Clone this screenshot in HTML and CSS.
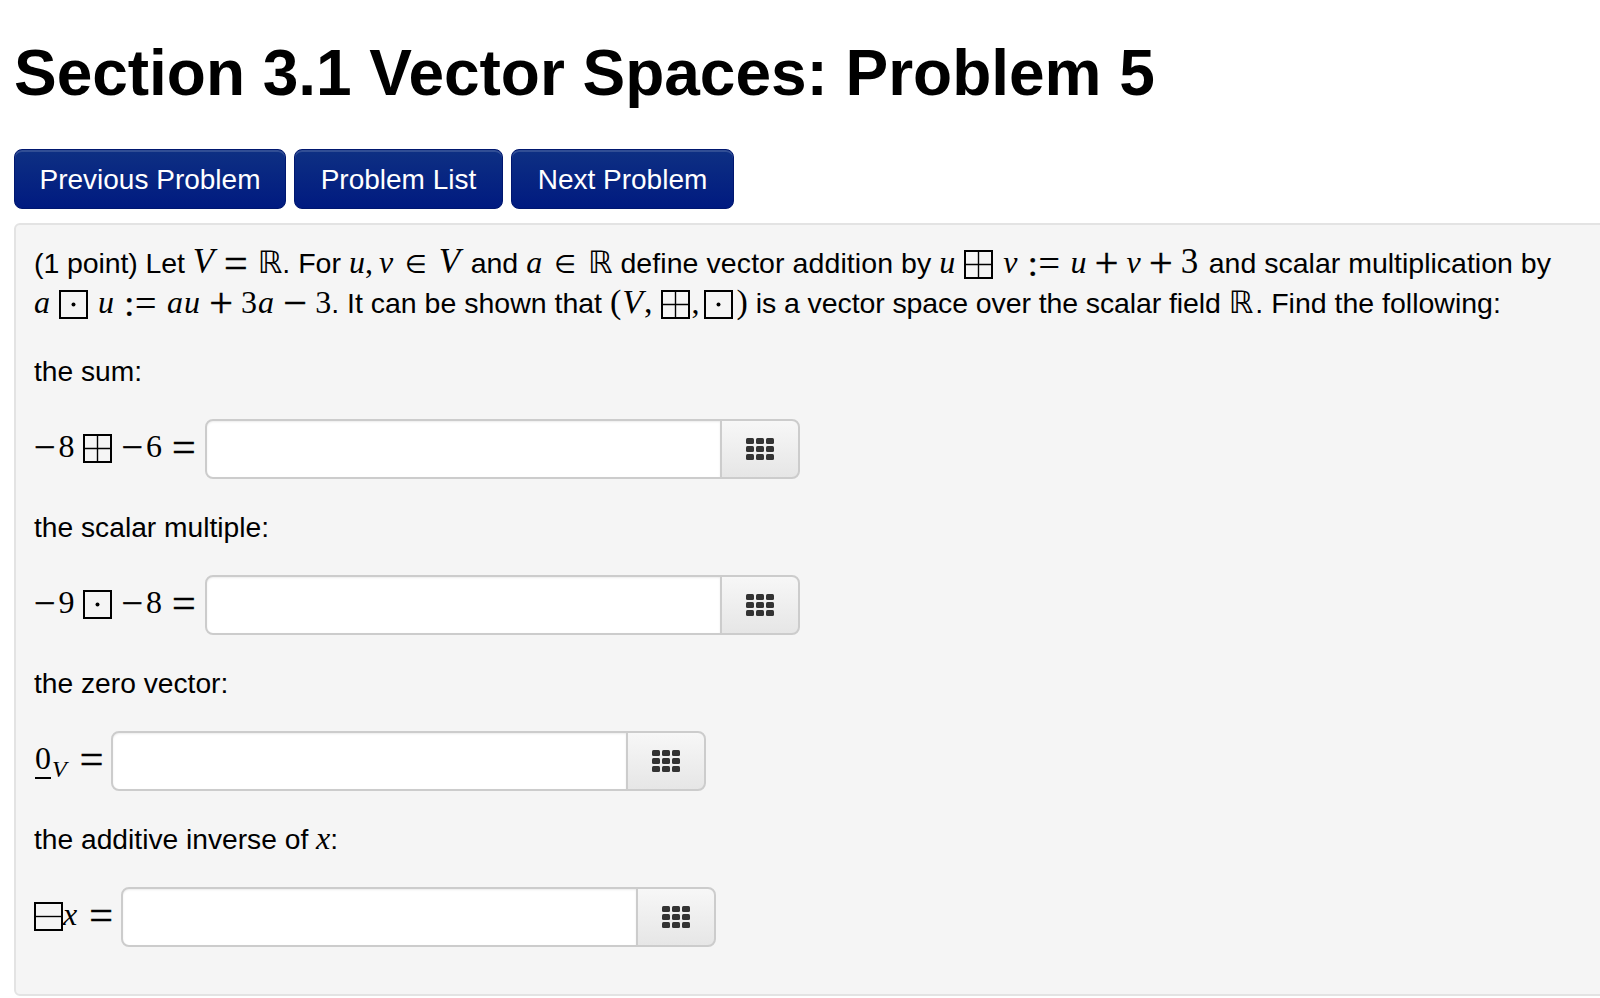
FILE: index.html
```html
<!DOCTYPE html>
<html lang="en">
<head>
<meta charset="utf-8">
<title>Section 3.1 Vector Spaces: Problem 5</title>
<link rel="stylesheet" href="styles.css">
</head>
<body>
<svg class="defs" width="0" height="0" aria-hidden="true">
  <defs>
    <symbol id="boxplus" viewBox="0 0 29 29"><rect x="1" y="1" width="27" height="27" fill="none" stroke="#000" stroke-width="2"/><path d="M14.5 1V28M1 14.5H28" stroke="#000" stroke-width="1.4"/></symbol>
    <symbol id="boxdot" viewBox="0 0 29 29"><rect x="1" y="1" width="27" height="27" fill="none" stroke="#000" stroke-width="2"/><circle cx="14.5" cy="14.5" r="2" fill="#000"/></symbol>
    <symbol id="boxminus" viewBox="0 0 29 29"><rect x="1" y="1" width="27" height="27" fill="none" stroke="#000" stroke-width="2"/><path d="M1 14.5H28" stroke="#000" stroke-width="1.4"/></symbol>
    <symbol id="grid" viewBox="0 0 28 22"><g fill="#333"><rect x="0" width="8" height="6" rx="1.5"/><rect x="10" width="8" height="6" rx="1.5"/><rect x="20" width="8" height="6" rx="1.5"/><rect x="0" y="8" width="8" height="6" rx="1.5"/><rect x="10" y="8" width="8" height="6" rx="1.5"/><rect x="20" y="8" width="8" height="6" rx="1.5"/><rect x="0" y="16" width="8" height="6" rx="1.5"/><rect x="10" y="16" width="8" height="6" rx="1.5"/><rect x="20" y="16" width="8" height="6" rx="1.5"/></g></symbol>
  </defs>
</svg>
<h1 class="title">Section 3.1 Vector Spaces: Problem 5</h1>
<nav class="nav">
  <a class="btn btn-first">Previous Problem</a>
  <a class="btn">Problem List</a>
  <a class="btn">Next Problem</a>
</nav>
<main class="well">
  <p class="intro"><span class="snug">(1 point) Let</span> <span class="m big"><i>V</i></span><span class="rel">=</span><span class="bb">ℝ</span>. For <span class="m"><i>u</i>,<i class="after-comma">v</i></span><span class="el">∈</span><span class="m big end"><i>V</i></span> and <span class="m"><i>a</i></span><span class="el">∈</span><span class="bb">ℝ</span> <span class="loose">define vector addition by</span> <span class="m"><i>u</i></span><svg class="box gap"><use href="#boxplus"/></svg><span class="m"><i>v</i></span><span class="rel assign">:=</span><span class="m"><i>u</i></span><span class="bin">+</span><span class="m"><i>v</i></span><span class="bin">+</span><span class="m big end">3</span> and scalar multiplication by<br>
  <span class="m"><i>a</i></span><svg class="box gap"><use href="#boxdot"/></svg><span class="m"><i>u</i></span><span class="rel assign">:=</span><span class="m spread"><i>au</i></span><span class="bin">+</span><span class="m spread">3<i>a</i></span><span class="bin">−</span><span class="m">3</span>. It can be shown that <span class="m paren">(<i>V</i>,</span><svg class="box tight"><use href="#boxplus"/></svg><span class="m">,</span><svg class="box tight"><use href="#boxdot"/></svg><span class="m close">)</span> <span class="snug">is a vector space over the scalar field</span> <span class="bb tail">ℝ</span>. Find the following:</p>

  <p class="label">the sum:</p>
  <div class="row">
    <span class="expr"><span class="neg">−</span><span class="m">8</span><svg class="box gap"><use href="#boxplus"/></svg><span class="neg">−</span><span class="m">6</span><span class="rel">=</span></span>
    <span class="group"><input class="field" type="text" aria-label="sum"><span class="addon"><svg class="grid"><use href="#grid"/></svg></span></span>
  </div>

  <p class="label">the scalar multiple:</p>
  <div class="row">
    <span class="expr"><span class="neg">−</span><span class="m">9</span><svg class="box gap"><use href="#boxdot"/></svg><span class="neg">−</span><span class="m">8</span><span class="rel">=</span></span>
    <span class="group"><input class="field" type="text" aria-label="scalar multiple"><span class="addon"><svg class="grid"><use href="#grid"/></svg></span></span>
  </div>

  <p class="label">the zero vector:</p>
  <div class="row">
    <span class="expr"><span class="m"><span class="under">0</span><sub class="sub"><i>V</i></sub></span><span class="rel shift">=</span></span>
    <span class="group"><input class="field" type="text" aria-label="zero vector"><span class="addon"><svg class="grid"><use href="#grid"/></svg></span></span>
  </div>

  <p class="label">the additive inverse of <span class="m"><i>x</i></span>:</p>
  <div class="row">
    <span class="expr"><svg class="box"><use href="#boxminus"/></svg><span class="m"><i>x</i></span><span class="rel shift">=</span></span>
    <span class="group"><input class="field" type="text" aria-label="additive inverse"><span class="addon"><svg class="grid"><use href="#grid"/></svg></span></span>
  </div>
</main>
</body>
</html>
```

FILE: styles.css
```css
html, body {
  margin: 0;
  height: 998px;
  overflow: hidden;
  background: #fff;
}
body {
  padding: 38px 0 0 14px;
  box-sizing: border-box;
  font-family: "Liberation Sans", Arial, sans-serif;
  font-size: 28px;
  line-height: 40px;
  color: #000;
}
.defs { position: absolute; }
.title {
  margin: 0 0 41px;
  font-size: 64px;
  line-height: 70px;
  font-weight: 700;
  letter-spacing: -0.03px;
}
.nav {
  display: flex;
  gap: 8px;
  margin-bottom: 14px;
}
.btn {
  display: block;
  height: 60px;
  box-sizing: border-box;
  padding: 0 25.7px;
  line-height: 60px;
  color: #fff;
  border: 1px solid #00176f;
  border-radius: 8px;
  background: linear-gradient(#0e3083, #001a80);
  box-shadow: inset 0 2px 0 rgba(255, 255, 255, .15);
}
.btn-first { padding: 0 24.5px; }
.well {
  box-sizing: border-box;
  height: 773px;
  margin-right: -12px;
  padding: 18px 18px 0;
  background: #f5f5f5;
  border: 2px solid #e3e3e3;
  border-radius: 6px;
}
.intro { margin: 0 0 28px; white-space: nowrap; font-size: 28.5px; }
.snug { letter-spacing: -0.1px; }
.loose { letter-spacing: 0.08px; }
.label { margin: 0 0 28px; height: 40px; font-size: 28.2px; }
.row {
  display: flex;
  align-items: center;
  height: 60px;
  margin-bottom: 28px;
  white-space: nowrap;
}
.expr { display: block; height: 40px; margin-top: -3px; }
.m {
  font-family: "Liberation Serif", "Times New Roman", serif;
  font-size: 32px;
  line-height: 0;
}
.m.big { font-size: 35px; }
.m.end { margin-right: 2.5px; }
.m.spread { letter-spacing: 1px; }
.after-comma { margin-left: 6px; }
.paren { font-size: 34px; letter-spacing: 1px; padding-right: 3px; }
.close { font-size: 34px; margin-left: 2px; }
.rel, .bin, .neg {
  font-family: "Liberation Serif", "Times New Roman", serif;
  font-size: 42px;
  line-height: 0;
  vertical-align: -4px;
  -webkit-text-stroke: 0.5px #000;
}
.rel { margin: 0 10px; }
.rel.shift { margin: 0 8px 0 12px; }
.expr .neg ~ .rel { margin-right: 9px; }
.bin { margin: 0 8.2px; }
.assign {
  font-size: 38px;
  letter-spacing: 0.5px;
  vertical-align: -3px;
  -webkit-text-stroke: 0.2px #000;
}
.neg { font-size: 38px; margin-right: 3px; vertical-align: -3px; }
.el {
  font-family: "DejaVu Sans", sans-serif;
  font-size: 25px;
  line-height: 0;
  margin: 0 12px;
}
.bb { font-family: "DejaVu Sans", sans-serif; font-size: 31px; line-height: 0; }
.bb.tail { margin-right: 2px; }
.box {
  display: inline-block;
  width: 29px;
  height: 29px;
  vertical-align: -6px;
}
.box.gap { margin: 0 10px 0 9px; }
.expr .box.gap { margin: 0 9px; }
.box.tight { margin: 0 2px 0 4px; }
.under {
  padding: 0 1px;
  text-decoration: underline;
  text-underline-offset: 8px;
  text-decoration-thickness: 2px;
}
.sub { font-size: 24px; line-height: 0; vertical-align: -8px; margin-right: 1px; }
.group {
  display: flex;
  height: 60px;
}
.field {
  width: 516px;
  height: 60px;
  box-sizing: border-box;
  padding: 0 14px;
  background: #fff;
  border: 2px solid #ccc;
  border-right-width: 1px;
  border-radius: 8px 0 0 8px;
  outline: none;
  box-shadow: inset 0 1px 2px rgba(0, 0, 0, .08);
}
.addon {
  display: flex;
  align-items: center;
  justify-content: center;
  width: 79px;
  height: 60px;
  box-sizing: border-box;
  background: linear-gradient(#f7f7f7, #e6e6e6);
  border: 2px solid #ccc;
  border-left-width: 1px;
  border-radius: 0 8px 8px 0;
}
.grid { width: 28px; height: 22px; }
```
